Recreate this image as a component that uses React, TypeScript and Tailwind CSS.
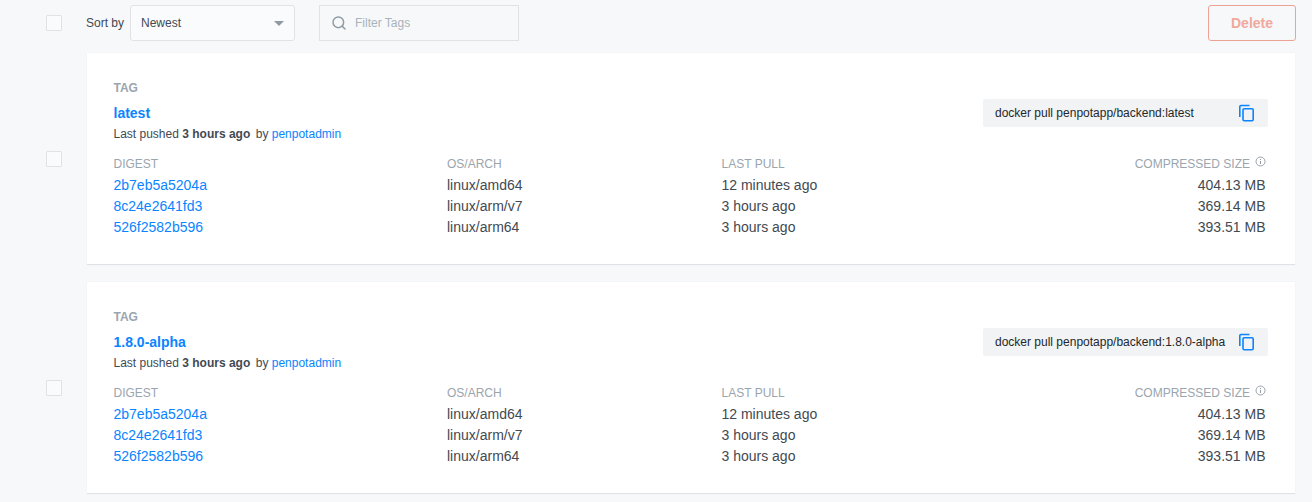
import { Search } from 'lucide-react';

const images = [
  { digest: '2b7eb5a5204a', arch: 'linux/amd64', pull: '12 minutes ago', size: '404.13 MB' },
  { digest: '8c24e2641fd3', arch: 'linux/arm/v7', pull: '3 hours ago', size: '369.14 MB' },
  { digest: '526f2582b596', arch: 'linux/arm64', pull: '3 hours ago', size: '393.51 MB' },
];

function Checkbox() {
  return <div className="w-[16px] h-[16px] border border-[#dfe3e6] rounded-[1px] bg-[#fafbfc]" />;
}

function CopyIcon() {
  return (
    <svg width="18" height="18" viewBox="0 0 18 18" fill="none" stroke="#0a84ff" strokeWidth="1.6">
      <path d="M11.5 1.5H3a1.2 1.2 0 0 0-1.2 1.2V13" />
      <rect x="5" y="4.8" width="10.2" height="12" rx="1.2" />
    </svg>
  );
}

function TagCard({ tag }: { tag: string }) {
  return (
    <div className="flex items-center">
      <div className="w-[87px] pl-[46px] shrink-0">
        <Checkbox />
      </div>
      <div className="w-[1208px] h-[212px] bg-white border-b border-[#dfe3e6] pt-[28px] pl-[26.5px] pr-[27px] shadow-[0_0_1px_#e5e8eb]">
        <div className="flex items-start justify-between">
          <div>
            <div className="text-[12px] leading-[14px] font-bold text-[#9aa5ae]">TAG</div>
            <div className="mt-[9px] text-[14px] leading-[18px] font-bold text-[#0a84ff]">{tag}</div>
            <div className="mt-[4px] text-[12px] leading-[16px] text-[#3f4a52]">
              Last pushed <span className="font-bold">3 hours ago</span>
              <span className="ml-[5.5px]">by </span>
              <span className="text-[#0a84ff]">penpotadmin</span>
            </div>
          </div>
          <div className="mt-[18px] w-[285px] h-[28px] bg-[#f1f3f5] rounded-[2px] flex items-center justify-between pl-[12px] pr-[12px]">
            <span className="text-[12px] text-[#22282c]">docker pull penpotapp/backend:{tag}</span>
            <CopyIcon />
          </div>
        </div>
        <div className="mt-[14px] grid grid-cols-[333.5px_274.5px_1fr]">
          <div className="text-[12px] leading-[16px] text-[#9aa5ae]">DIGEST</div>
          <div className="text-[12px] leading-[16px] text-[#9aa5ae]">OS/ARCH</div>
          <div className="flex justify-between pr-[2px]">
            <span className="text-[12px] leading-[16px] text-[#9aa5ae]">LAST PULL</span>
            <span className="text-[12px] leading-[16px] text-[#9aa5ae] flex items-start gap-[5px]">
              COMPRESSED SIZE
              <svg width="11" height="11" viewBox="0 0 11 11" fill="none" stroke="#8f9aa3">
                <circle cx="5.5" cy="5.5" r="4.5" strokeWidth="0.9" />
                <path d="M5.5 5v3M5.5 3v1" strokeWidth="1" />
              </svg>
            </span>
          </div>
        </div>
        <div className="mt-[3px]">
          {images.map((img) => (
            <div key={img.digest} className="grid grid-cols-[333.5px_274.5px_1fr] text-[14px] leading-[21px] text-[#3f4a52]">
              <span className="text-[#0a84ff]">{img.digest}</span>
              <span>{img.arch}</span>
              <div className="flex justify-between pr-[2.5px]">
                <span>{img.pull}</span>
                <span>{img.size}</span>
              </div>
            </div>
          ))}
        </div>
      </div>
    </div>
  );
}

export default function App() {
  return (
    <div className="w-[1312px] h-[502px] overflow-hidden bg-[#f7f8fa]" style={{ fontFamily: '"Liberation Sans", sans-serif' }}>
      <div className="h-[46px] mb-[7px] flex items-center pl-[46px] pr-[16px]">
        <Checkbox />
        <span className="ml-[24px] text-[12px] text-[#3f4a52]">Sort by</span>
        <div className="ml-[6px] w-[165px] h-[36px] bg-[#fafbfc] border border-[#dfe3e6] rounded-[3px] flex items-center justify-between pl-[10px] pr-[10px]">
          <span className="text-[12px] text-[#3f4a52]">Newest</span>
          <span className="w-0 h-0 border-l-[5.5px] border-r-[5.5px] border-t-[5.5px] border-l-transparent border-r-transparent border-t-[#8f9aa3]" />
        </div>
        <div className="ml-[24px] w-[200px] h-[36px] bg-[#f7f8fa] border border-[#dfe3e6] flex items-center pl-[11px]">
          <Search size={16} color="#8f9aa3" strokeWidth={2.2} />
          <span className="ml-[8px] text-[12px] text-[#a9b3ba]">Filter Tags</span>
        </div>
        <button type="button" className="ml-auto w-[88px] h-[36px] border border-[#eeA295] rounded-[3px] text-[14px] font-bold text-[#f0a99c]">
          Delete
        </button>
      </div>
      <div className="flex flex-col gap-[17px]">
        <TagCard tag="latest" />
        <TagCard tag="1.8.0-alpha" />
      </div>
    </div>
  );
}
